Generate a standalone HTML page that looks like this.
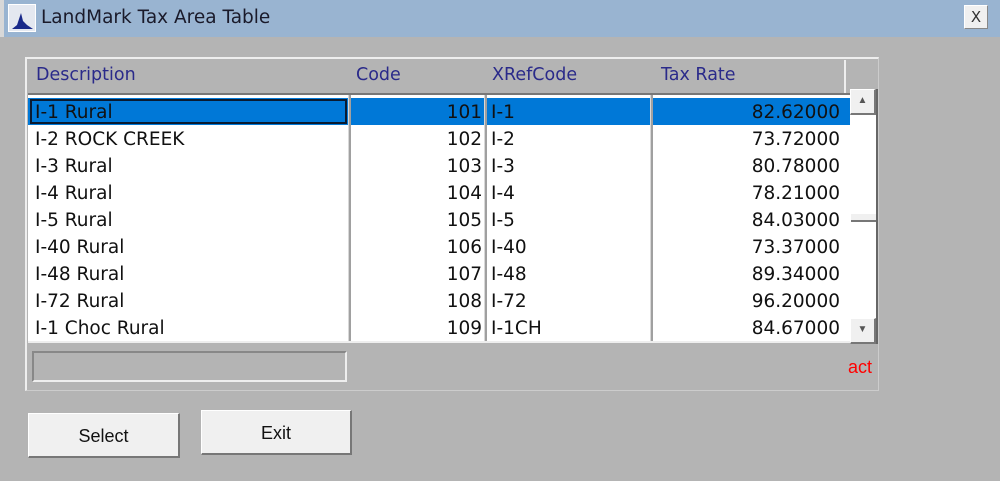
<!DOCTYPE html>
<html><head><style>
*{margin:0;padding:0;box-sizing:border-box}
body{width:1000px;height:481px;background:#b4b4b4;position:relative;overflow:hidden;font-family:"DejaVu Sans","Liberation Sans",sans-serif}
.a{position:absolute}
.title{left:0;top:0;width:1000px;height:37px;background:#99b4d1;border-left:4px solid #d8d8d8}
.tt{left:41px;top:7px;font-size:18.5px;color:#1a1a2a}
.close{left:964px;top:5px;width:24px;height:24px;background:#f0f0f0;border:1px solid #fff;border-right-color:#888;border-bottom-color:#888;font-size:15px;text-align:center;line-height:22px;color:#333}
.panel{left:25px;top:57px;width:854px;height:334px;border:2px solid #eee;border-right:1px solid #ccc;border-bottom:1px solid #ccc}
.hdr{top:65px;font-size:17.5px;color:#2a2a8a}
.grid{left:28px;top:93px;width:822px;height:250px;background:#fff;border-top:2px solid #777;border-bottom:2px solid #eee;overflow:hidden}
.row{position:absolute;left:0;width:822px;height:27px;font-size:18.5px;color:#111}
.row span{position:absolute;top:4px}
.sel{background:#0078d7}
.vl{position:absolute;top:0;width:3px;height:250px;background:#a0a0a0;border-left:1px solid #d8d8d8}
.sb{left:850px;top:89px;width:28px;height:255px;background:#fff;border-right:2px solid #666}
.btn{background:#f0f0f0;border:1px solid #fff;border-right:2px solid #777;border-bottom:2px solid #777;font-family:"Liberation Sans",sans-serif;font-size:18px;color:#111;text-align:center}
</style></head><body>
<div class="a title"></div>
<div class="a" style="left:8px;top:4px;width:28px;height:28px;background:#e4e8f0;border:1px solid #fff">
<svg width="26" height="26"><path d="M3 24 L8 20 L12 8 L14 16 L18 20 L24 24 Z" fill="#1a2a8a"/></svg></div>
<div class="a tt">LandMark Tax Area Table</div>
<div class="a close">X</div>
<div class="a panel"></div>
<div class="a" style="left:28px;top:60px;width:818px;height:33px;background:#b4b4b4;border-right:2px solid #eee"></div>
<div class="a hdr" style="left:36px">Description</div>
<div class="a hdr" style="left:356px">Code</div>
<div class="a hdr" style="left:492px">XRefCode</div>
<div class="a hdr" style="left:661px">Tax Rate</div>
<div class="a grid">
<div class="row sel" style="top:3px"></div>
<div class="a" style="left:2px;top:4px;width:317px;height:25px;border:2px solid #0a1a30"></div>
<div class="vl" style="left:320px"></div><div class="vl" style="left:456px"></div><div class="vl" style="left:622px"></div>
<div class="row" style="top:3px"><span style="left:7px">I-1 Rural</span><span style="right:368px">101</span><span style="left:463px">I-1</span><span style="right:10px">82.62000</span></div>
<div class="row" style="top:30px"><span style="left:7px">I-2 ROCK CREEK</span><span style="right:368px">102</span><span style="left:463px">I-2</span><span style="right:10px">73.72000</span></div>
<div class="row" style="top:57px"><span style="left:7px">I-3 Rural</span><span style="right:368px">103</span><span style="left:463px">I-3</span><span style="right:10px">80.78000</span></div>
<div class="row" style="top:84px"><span style="left:7px">I-4 Rural</span><span style="right:368px">104</span><span style="left:463px">I-4</span><span style="right:10px">78.21000</span></div>
<div class="row" style="top:111px"><span style="left:7px">I-5 Rural</span><span style="right:368px">105</span><span style="left:463px">I-5</span><span style="right:10px">84.03000</span></div>
<div class="row" style="top:138px"><span style="left:7px">I-40 Rural</span><span style="right:368px">106</span><span style="left:463px">I-40</span><span style="right:10px">73.37000</span></div>
<div class="row" style="top:165px"><span style="left:7px">I-48 Rural</span><span style="right:368px">107</span><span style="left:463px">I-48</span><span style="right:10px">89.34000</span></div>
<div class="row" style="top:192px"><span style="left:7px">I-72 Rural</span><span style="right:368px">108</span><span style="left:463px">I-72</span><span style="right:10px">96.20000</span></div>
<div class="row" style="top:219px"><span style="left:7px">I-1 Choc Rural</span><span style="right:368px">109</span><span style="left:463px">I-1CH</span><span style="right:10px">84.67000</span></div>
</div>
<div class="a sb"></div>
<div class="a btn" style="left:850px;top:89px;width:26px;height:26px;font-size:10px;line-height:22px;color:#555">▲</div>
<div class="a" style="left:851px;top:213px;width:25px;height:9px;background:#f0f0f0;border-top:1px solid #fff;border-bottom:2px solid #777"></div>
<div class="a btn" style="left:850px;top:318px;width:26px;height:26px;font-size:10px;line-height:22px;color:#555">▼</div>
<div class="a" style="left:32px;top:351px;width:315px;height:31px;border:2px solid #eee;border-top-color:#888;border-left-color:#888;background:#b4b4b4"></div>
<div class="a" style="left:848px;top:357px;font-size:18px;color:#f00;font-family:'Liberation Sans',sans-serif">act</div>
<div class="a btn" style="left:28px;top:413px;width:152px;height:45px;line-height:44px">Select</div>
<div class="a btn" style="left:201px;top:410px;width:151px;height:45px;line-height:44px">Exit</div>
</body></html>
